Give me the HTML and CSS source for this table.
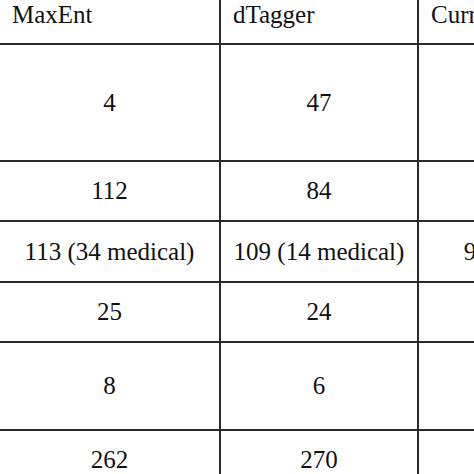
FILE: index.html
```html
<!DOCTYPE html>
<html>
<head>
<meta charset="utf-8">
<link rel="stylesheet" href="styles.css">
</head>
<body>
<div class="table">
  <div class="cell head">MaxEnt</div>
  <div class="cell head">dTagger</div>
  <div class="cell head">Current</div>

  <div class="cell">4</div>
  <div class="cell">47</div>
  <div class="cell"></div>

  <div class="cell">112</div>
  <div class="cell">84</div>
  <div class="cell"></div>

  <div class="cell">113 (34 medical)</div>
  <div class="cell">109 (14 medical)</div>
  <div class="cell">97 (12 medical)</div>

  <div class="cell">25</div>
  <div class="cell">24</div>
  <div class="cell"></div>

  <div class="cell">8</div>
  <div class="cell">6</div>
  <div class="cell"></div>

  <div class="cell">262</div>
  <div class="cell">270</div>
  <div class="cell"></div>
</div>
</body>
</html>
```
FILE: styles.css
```css
html, body {
  margin: 0;
  padding: 0;
  overflow: hidden;
  background: #fff;
}
.table {
  display: grid;
  grid-template-columns: 221px 198px 250px;
  grid-template-rows: 45px 117px 60px 61px 60px 88px 60px;
  font-family: "Liberation Serif", "Times New Roman", serif;
  font-size: 25px;
  color: #111;
  width: 669px;
}
.cell {
  box-sizing: border-box;
  border-right: 2px solid #2a2a2a;
  border-bottom: 2px solid #2a2a2a;
  display: flex;
  align-items: center;
  justify-content: center;
  line-height: 28px;
  white-space: nowrap;
}
.cell.head {
  align-items: flex-start;
  justify-content: flex-start;
  padding-left: 12px;
  padding-top: 1px;
}
```
